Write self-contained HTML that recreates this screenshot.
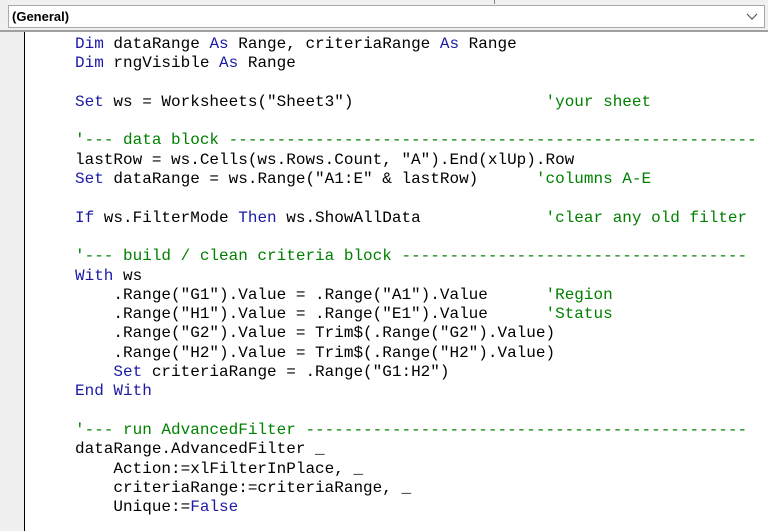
<!DOCTYPE html>
<html><head><style>
html,body{margin:0;padding:0;width:768px;height:531px;overflow:hidden;background:#fff;font-family:"Liberation Sans",sans-serif}
.top{position:absolute;left:0;top:0;width:768px;height:32px;background:#f0f0f0;border-bottom:2px solid #a0a0a0;box-sizing:border-box}
.dd{position:absolute;left:8px;top:5px;width:757px;height:23px;background:#fff;border:1px solid #a8a8a8;box-sizing:border-box;font-size:13px;font-weight:bold;line-height:21px;padding-left:3px;color:#000}
.chev{position:absolute;right:6px;top:5px}
.margin{position:absolute;left:0;top:32px;width:24px;height:499px;background:#f0f0f0;border-right:1px solid #000}
pre{position:absolute;left:75px;top:35px;margin:0;font-family:"Liberation Mono","Courier New",monospace;font-size:16px;line-height:19.3px;color:#000}
.k{color:#1a1aa6}.c{color:#008000}
.tick{position:absolute;left:494px;top:0;width:1px;height:4px;background:#888}
</style></head><body>
<div class="top"><div class="tick"></div><div class="dd">(General)<svg class="chev" width="12" height="10" viewBox="0 0 12 10"><path d="M1 3 L6 8 L11 3" fill="none" stroke="#555" stroke-width="1.2"/></svg></div></div>
<div class="margin"></div>
<pre><span class="k">Dim</span> dataRange <span class="k">As</span> Range, criteriaRange <span class="k">As</span> Range
<span class="k">Dim</span> rngVisible <span class="k">As</span> Range

<span class="k">Set</span> ws = Worksheets("Sheet3")                    <span class="c">'your sheet</span>

<span class="c">'--- data block -------------------------------------------------------</span>
lastRow = ws.Cells(ws.Rows.Count, "A").End(xlUp).Row
<span class="k">Set</span> dataRange = ws.Range("A1:E" &amp; lastRow)      <span class="c">'columns A-E</span>

<span class="k">If</span> ws.FilterMode <span class="k">Then</span> ws.ShowAllData             <span class="c">'clear any old filter</span>

<span class="c">'--- build / clean criteria block ------------------------------------</span>
<span class="k">With</span> ws
    .Range("G1").Value = .Range("A1").Value      <span class="c">'Region</span>
    .Range("H1").Value = .Range("E1").Value      <span class="c">'Status</span>
    .Range("G2").Value = Trim$(.Range("G2").Value)
    .Range("H2").Value = Trim$(.Range("H2").Value)
    <span class="k">Set</span> criteriaRange = .Range("G1:H2")
<span class="k">End With</span>

<span class="c">'--- run AdvancedFilter ----------------------------------------------</span>
dataRange.AdvancedFilter _
    Action:=xlFilterInPlace, _
    criteriaRange:=criteriaRange, _
    Unique:=<span class="k">False</span></pre>
</body></html>
